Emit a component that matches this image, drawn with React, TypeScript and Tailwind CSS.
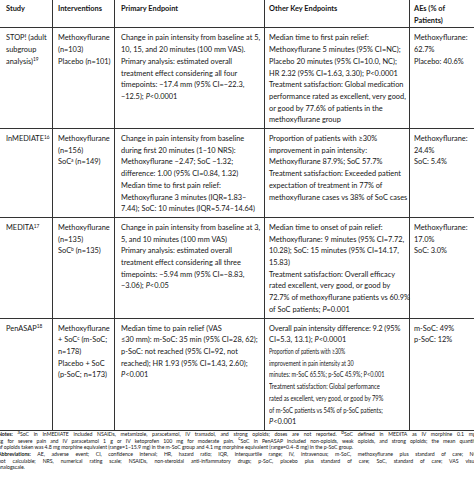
import React, { useLayoutEffect, useRef, useState } from 'react';

type Line = React.ReactNode;

const S = ({ children }: { children: React.ReactNode }) => (
  <sup className="text-[4.8px]">{children}</sup>
);

// Condensed line: scaled horizontally to the width measured in the reference.
function Fit({ w, children }: { w: number; children: React.ReactNode }) {
  const ref = useRef<HTMLSpanElement>(null);
  const [k, setK] = useState(1);
  useLayoutEffect(() => {
    const el = ref.current;
    if (el) {
      const nat = el.offsetWidth;
      if (nat > 0) setK(Math.min(1, w / nat));
    }
  }, [w]);
  return (
    <span
      ref={ref}
      className="inline-block origin-left whitespace-nowrap"
      style={{ transform: `scaleX(${k})` }}
    >
      {children}
    </span>
  );
}

const header: Line[][] = [
  ['Study'],
  ['Interventions'],
  ['Primary Endpoint'],
  ['Other Key Endpoints'],
  ['AEs (% of', 'Patients)'],
];

const rows: Line[][][] = [
  [
    ['STOP! (adult', 'subgroup', <>analysis)<S>19</S></>],
    ['Methoxyflurane', '(n=103)', 'Placebo (n=101)'],
    [
      'Change in pain intensity from baseline at 5,',
      '10, 15, and 20 minutes (100 mm VAS).',
      'Primary analysis: estimated overall',
      'treatment effect considering all four',
      'timepoints: −17.4 mm (95% CI=−22.3,',
      <>−12.5); <i>P</i>&lt;0.0001</>,
    ],
    [
      'Median time to first pain relief:',
      'Methoxyflurane 5 minutes (95% CI=NC);',
      'Placebo 20 minutes (95% CI=10.0, NC);',
      'HR 2.32 (95% CI=1.63, 3.30); P<0.0001',
      'Treatment satisfaction: Global medication',
      'performance rated as excellent, very good,',
      'or good by 77.6% of patients in the',
      'methoxyflurane group',
    ],
    ['Methoxyflurane:', '62.7%', 'Placebo: 40.6%'],
  ],
  [
    [<>InMEDIATE<S>16</S></>],
    ['Methoxyflurane', '(n=156)', <>SoC<S>a</S> (n=149)</>],
    [
      'Change in pain intensity from baseline',
      'during first 20 minutes (1–10 NRS):',
      'Methoxyflurane −2.47; SoC −1.32;',
      'difference: 1.00 (95% CI=0.84, 1.32)',
      'Median time to first pain relief:',
      'Methoxyflurane 3 minutes (IQR=1.83–',
      '7.44); SoC: 10 minutes (IQR=5.74–14.64)',
    ],
    [
      'Proportion of patients with ≥30%',
      'improvement in pain intensity:',
      'Methoxyflurane 87.9%; SoC 57.7%',
      'Treatment satisfaction: Exceeded patient',
      'expectation of treatment in 77% of',
      'methoxyflurane cases vs 38% of SoC cases',
    ],
    ['Methoxyflurane:', '24.4%', 'SoC: 5.4%'],
  ],
  [
    [<>MEDITA<S>17</S></>],
    ['Methoxyflurane', '(n=135)', <>SoC<S>b</S> (n=135)</>],
    [
      'Change in pain intensity from baseline at 3,',
      '5, and 10 minutes (100 mm VAS)',
      'Primary analysis: estimated overall',
      'treatment effect considering all three',
      'timepoints: −5.94 mm (95% CI=−8.83,',
      <>−3.06); <i>P</i>&lt;0.05</>,
    ],
    [
      'Median time to onset of pain relief:',
      'Methoxyflurane: 9 minutes (95% CI=7.72,',
      '10.28); SoC: 15 minutes (95% CI=14.17,',
      '15.83)',
      'Treatment satisfaction: Overall efficacy',
      'rated excellent, very good, or good by',
      '72.7% of methoxyflurane patients vs 60.9%',
      <>of SoC patients; <i>P</i>=0.001</>,
    ],
    ['Methoxyflurane:', '17.0%', 'SoC: 3.0%'],
  ],
  [
    [<>PenASAP<S>18</S></>],
    ['Methoxyflurane', <>+ SoC<S>c</S> (m-SoC;</>, 'n=178)', 'Placebo + SoC', '(p-SoC; n=173)'],
    [
      'Median time to pain relief (VAS',
      '≤30 mm): m-SoC: 35 min (95% CI=28, 62);',
      'p-SoC: not reached (95% CI=92, not',
      'reached); HR 1.93 (95% CI=1.43, 2.60);',
      <><i>P</i>&lt;0.001</>,
    ],
    [
      <span className="tracking-[-0.1px]">Overall pain intensity difference: 9.2 (95%</span>,
      <>CI=5.3, 13.1); <i>P</i>&lt;0.0001</>,
      <Fit w={76}>Proportion of patients with ≥30%</Fit>,
      <Fit w={85}>improvement in pain intensity at 30</Fit>,
      <Fit w={116}>minutes: m-SoC 65.5%; p-SoC 45.9%; P&lt;0.001</Fit>,
      <Fit w={111}>Treatment satisfaction: Global performance</Fit>,
      <Fit w={114}>rated as excellent, very good, or good by 79%</Fit>,
      <Fit w={114}>of m-SoC patients vs 54% of p-SoC patients;</Fit>,
      <><i>P</i>&lt;0.001</>,
    ],
    ['m-SoC: 49%', 'p-SoC: 12%'],
  ],
];

const pads = ['pl-[6px]', 'pl-[5px]', 'pl-[6px]', 'pl-[4px]', 'pl-[4px]'];

function CellView({ lines, col, head }: { lines: Line[]; col: number; head?: boolean }) {
  return (
    <div
      className={`border-b border-[#333] ${col < 4 ? 'border-r' : ''} ${pads[col]} ${
        head ? 'pt-[3px] pb-[1px] font-bold' : 'pt-[4px] pb-[2px]'
      }`}
    >
      {lines.map((l, i) => (
        <div key={i} className="whitespace-nowrap">
          {l}
        </div>
      ))}
    </div>
  );
}

const just = 'text-justify [text-align-last:justify]';

export default function App() {
  return (
    <div
      className="w-[474px] h-[481px] overflow-hidden bg-white text-[#161616]"
      style={{ fontFamily: 'Lato, "Liberation Sans", sans-serif' }}
    >
      <div className="grid grid-cols-[53px_62px_150px_145px_1fr] text-[7.4px] leading-[11.7px]">
        {header.map((c, i) => (
          <CellView key={`h${i}`} lines={c} col={i} head />
        ))}
        {rows.map((r, ri) =>
          r.map((c, ci) => <CellView key={`${ri}-${ci}`} lines={c} col={ci} />)
        )}
      </div>
      <div className="ml-[-2px] w-[480px] text-[5.2px] leading-[6.7px] tracking-[-0.05px]">
        <div className={just}>
          <b>Notes: </b>
          <S>a</S>SoC in InMEDIATE included NSAIDs, metamizole, paracetamol, IV tramadol, and strong opioids; doses are not reported. <S>b</S>SoC defined in MEDITA as IV morphine 0.1 mg/
        </div>
        <div className={just}>
          kg for severe pain and IV paracetamol 1 g or IV ketoprofen 100 mg for moderate pain. <S>c</S>SoC in PenASAP included non-opioids, weak opioids, and strong opioids; the mean quantity
        </div>
        <div>
          of opioids taken was 4.8 mg morphine equivalent (range=1–15.9 mg) in the m-SoC group and 4.1 mg morphine equivalent (range=0.4–8 mg) in the p-SoC group.
        </div>
        <div className={just}>
          <b>Abbreviations: </b>AE, adverse event; CI, confidence interval; HR, hazard ratio; IQR, interquartile range; IV, intravenous; m-SoC, methoxyflurane plus standard of care; NC,
        </div>
        <div className={just}>
          not calculable; NRS, numerical rating scale; NSAIDs, non-steroidal anti-inflammatory drugs; p-SoC, placebo plus standard of care; SoC, standard of care; VAS visual
        </div>
        <div>analogscale.</div>
      </div>
    </div>
  );
}
